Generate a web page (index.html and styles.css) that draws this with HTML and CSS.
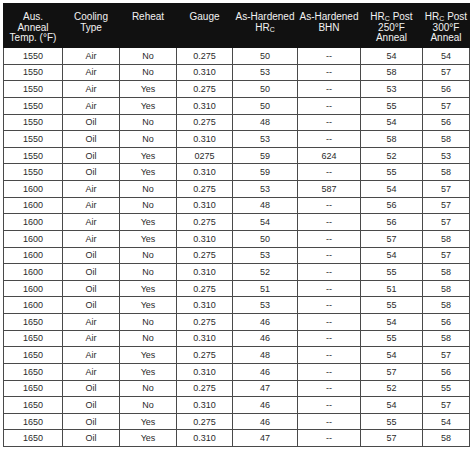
FILE: index.html
```html
<!DOCTYPE html>
<html>
<head>
<meta charset="utf-8">
<link rel="stylesheet" href="styles.css">
</head>
<body>
<div class="wrap">
<table class="data">
<colgroup>
<col class="c1"><col class="c2"><col class="c3"><col class="c4"><col class="c5"><col class="c6"><col class="c7"><col class="c8">
</colgroup>
<thead>
<tr>
<th>Aus.<br>Anneal<br>Temp. (°F)</th>
<th>Cooling<br>Type</th>
<th>Reheat</th>
<th>Gauge</th>
<th>As-Hardened<br>HR<sub>C</sub></th>
<th>As-Hardened<br>BHN</th>
<th>HR<sub>C</sub> Post<br>250°F<br>Anneal</th>
<th>HR<sub>C</sub> Post<br>300°F<br>Anneal</th>
</tr>
</thead>
<tbody>
<tr><td>1550</td><td>Air</td><td>No</td><td>0.275</td><td>50</td><td>--</td><td>54</td><td>54</td></tr>
<tr><td>1550</td><td>Air</td><td>No</td><td>0.310</td><td>53</td><td>--</td><td>58</td><td>57</td></tr>
<tr><td>1550</td><td>Air</td><td>Yes</td><td>0.275</td><td>50</td><td>--</td><td>53</td><td>56</td></tr>
<tr><td>1550</td><td>Air</td><td>Yes</td><td>0.310</td><td>50</td><td>--</td><td>55</td><td>57</td></tr>
<tr><td>1550</td><td>Oil</td><td>No</td><td>0.275</td><td>48</td><td>--</td><td>54</td><td>56</td></tr>
<tr><td>1550</td><td>Oil</td><td>No</td><td>0.310</td><td>53</td><td>--</td><td>58</td><td>58</td></tr>
<tr><td>1550</td><td>Oil</td><td>Yes</td><td>0275</td><td>59</td><td>624</td><td>52</td><td>53</td></tr>
<tr><td>1550</td><td>Oil</td><td>Yes</td><td>0.310</td><td>59</td><td>--</td><td>55</td><td>58</td></tr>
<tr><td>1600</td><td>Air</td><td>No</td><td>0.275</td><td>53</td><td>587</td><td>54</td><td>57</td></tr>
<tr><td>1600</td><td>Air</td><td>No</td><td>0.310</td><td>48</td><td>--</td><td>56</td><td>57</td></tr>
<tr><td>1600</td><td>Air</td><td>Yes</td><td>0.275</td><td>54</td><td>--</td><td>56</td><td>57</td></tr>
<tr><td>1600</td><td>Air</td><td>Yes</td><td>0.310</td><td>50</td><td>--</td><td>57</td><td>58</td></tr>
<tr><td>1600</td><td>Oil</td><td>No</td><td>0.275</td><td>53</td><td>--</td><td>54</td><td>57</td></tr>
<tr><td>1600</td><td>Oil</td><td>No</td><td>0.310</td><td>52</td><td>--</td><td>55</td><td>58</td></tr>
<tr><td>1600</td><td>Oil</td><td>Yes</td><td>0.275</td><td>51</td><td>--</td><td>51</td><td>58</td></tr>
<tr><td>1600</td><td>Oil</td><td>Yes</td><td>0.310</td><td>53</td><td>--</td><td>55</td><td>58</td></tr>
<tr><td>1650</td><td>Air</td><td>No</td><td>0.275</td><td>46</td><td>--</td><td>54</td><td>56</td></tr>
<tr><td>1650</td><td>Air</td><td>No</td><td>0.310</td><td>46</td><td>--</td><td>55</td><td>58</td></tr>
<tr><td>1650</td><td>Air</td><td>Yes</td><td>0.275</td><td>48</td><td>--</td><td>54</td><td>57</td></tr>
<tr><td>1650</td><td>Air</td><td>Yes</td><td>0.310</td><td>46</td><td>--</td><td>57</td><td>56</td></tr>
<tr><td>1650</td><td>Oil</td><td>No</td><td>0.275</td><td>47</td><td>--</td><td>52</td><td>55</td></tr>
<tr><td>1650</td><td>Oil</td><td>No</td><td>0.310</td><td>46</td><td>--</td><td>54</td><td>57</td></tr>
<tr><td>1650</td><td>Oil</td><td>Yes</td><td>0.275</td><td>46</td><td>--</td><td>55</td><td>54</td></tr>
<tr><td>1650</td><td>Oil</td><td>Yes</td><td>0.310</td><td>47</td><td>--</td><td>57</td><td>58</td></tr>
</tbody>
</table>
</div>
</body>
</html>
```
FILE: styles.css
```css
html, body {
  margin: 0;
  padding: 0;
  background: #ffffff;
}
.wrap {
  padding: 3px 0 0 3px;
}
.data {
  border-collapse: collapse;
  table-layout: fixed;
  width: 466px;
  font-family: "Liberation Sans", Arial, sans-serif;
  color: #2a2a2a;
}
.c1 { width: 59px; }
.c2 { width: 57px; }
.c3 { width: 57px; }
.c4 { width: 56px; }
.c5 { width: 65px; }
.c6 { width: 63px; }
.c7 { width: 62px; }
.c8 { width: 47px; }
.data th {
  background: #111111;
  color: #f2f2f2;
  font-weight: normal;
  font-size: 10px;
  line-height: 10.5px;
  height: 44px;
  padding: 8px 0 0 0;
  box-sizing: border-box;
  vertical-align: top;
  text-align: center;
  border: 1px solid #111111;
}
.data th sub {
  font-size: 7px;
  line-height: 0;
  vertical-align: -1px;
}
.data td {
  font-size: 9px;
  height: 16.625px;
  padding: 0;
  box-sizing: border-box;
  text-align: center;
  vertical-align: middle;
  border: 1px solid #4a4a4a;
  line-height: 10px;
}
```
